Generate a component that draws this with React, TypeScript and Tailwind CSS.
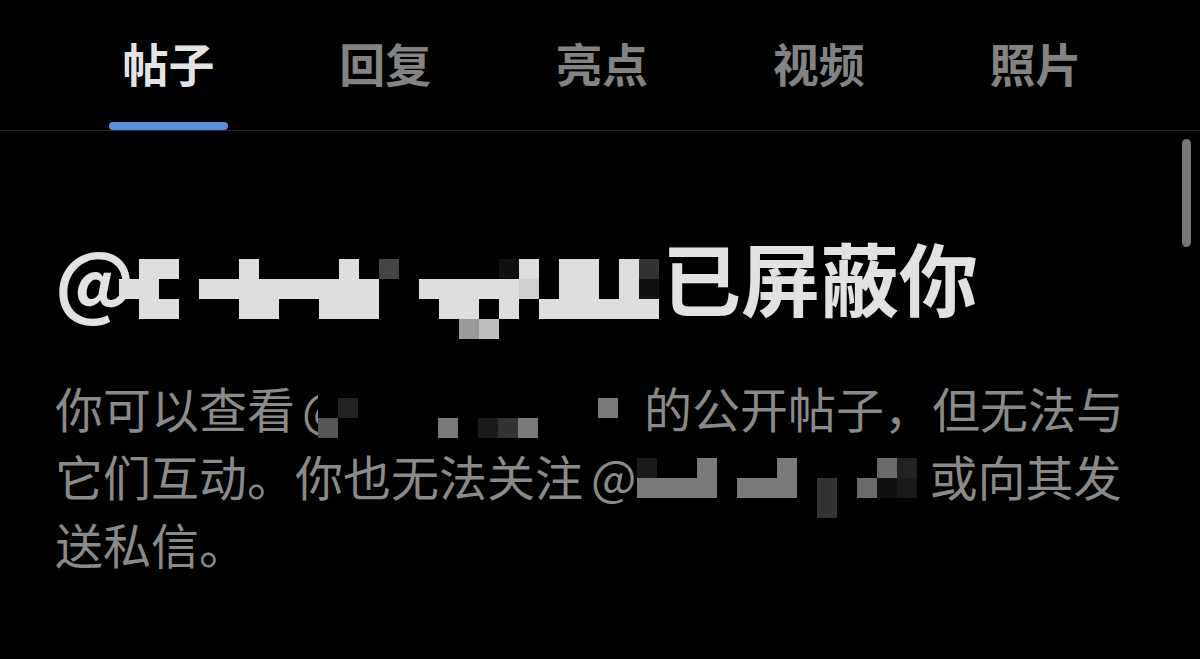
import React from "react";

// Mosaic cells: each char maps to a colour class, "." is empty
const CELL: Record<string, string> = {
  W: "bg-[#dedede]",
  w: "bg-[#cfcfcf]",
  L: "bg-[#bdbdbd]",
  G: "bg-[#9a9a9a]",
  g: "bg-[#7a7a7a]",
  h: "bg-[#6a6a6a]",
  m: "bg-[#555555]",
  D: "bg-[#444444]",
  d: "bg-[#333333]",
  k: "bg-[#222222]",
  K: "bg-[#1a1a1a]",
  x: "bg-[#111111]",
  ".": "",
};

const headingMosaic = [
  ".WW...W....W.D.....xW.WW.Wd",
  "WW..WWWWWWWWW..WWWWWw.WW.Wx",
  ".WW...WW..WWW...WW.W.WWWWWW",
  ".................GL........",
];

const line1Mosaic = [
  ".k............g",
  "m.....g.Kdg....",
];

const line2Mosaic = [
  "K..g...g....hk",
  "gggg.ggg.d.hxK",
  ".........d....",
];

function Mosaic({ rows }: { rows: string[] }) {
  return (
    <div className="flex flex-col shrink-0">
      {rows.map((row, i) => (
        <div key={i} className="flex">
          {row.split("").map((c, j) => (
            <div key={j} className={`w-[20px] h-[20px] ${CELL[c]}`} />
          ))}
        </div>
      ))}
    </div>
  );
}

const tabs = ["帖子", "回复", "亮点", "视频", "照片"];

export default function App() {
  return (
    <div
      className="relative w-[1200px] h-[659px] bg-black overflow-hidden"
      style={{ fontFamily: '"Noto Sans CJK SC", "Noto Sans", sans-serif' }}
    >
      {/* Tabs */}
      <header className="h-[131px] border-b border-[#262626] pl-[60px] pr-[56px] grid grid-cols-5">
        {tabs.map((t, i) => (
          <div key={t} className="flex flex-col items-center justify-between">
            <span
              className={`pt-[34px] text-[46px] leading-[56px] font-bold ${
                i === 0 ? "text-[#e4e4e4]" : "text-[#838383]"
              }`}
            >
              {t}
            </span>
            {i === 0 ? (
              <div className="w-[119px] h-[8px] rounded-full bg-[#5b8fe0]" />
            ) : (
              <div className="h-[8px]" />
            )}
          </div>
        ))}
      </header>

      {/* Scrollbar */}
      <div className="absolute left-[1182px] top-[139px] w-[9px] h-[108px] rounded-full bg-[#767676]" />

      <main className="pl-[55px] pt-[106px]">
        {/* Heading */}
        <div className="flex items-start h-[80px] text-[79px] leading-[80px] font-bold text-[#e2e2e2]">
          <span className="w-[64px] shrink-0">@</span>
          <div className="mt-[22px]">
            <Mosaic rows={headingMosaic} />
          </div>
          <span className="ml-[3px] whitespace-nowrap">已屏蔽你</span>
        </div>

        {/* Body */}
        <div className="mt-[56px] text-[48px] leading-[68px] text-[#8a8a8a] whitespace-nowrap">
          <div className="flex items-start h-[68px]">
            <span>你可以查看</span>
            <span className="ml-[7px] inline-block w-[16px] overflow-hidden">@</span>
            <div className="mt-[25px] w-[326px]">
              <Mosaic rows={line1Mosaic} />
            </div>
            <span>的公开帖子，但无法与</span>
          </div>
          <div className="flex items-start h-[68px]">
            <span>它们互动。你也无法关注</span>
            <span className="ml-[8px]">@</span>
            <div className="mt-[17px] ml-[1px] w-[292px]">
              <Mosaic rows={line2Mosaic} />
            </div>
            <span>或向其发</span>
          </div>
          <div className="h-[68px]">送私信。</div>
        </div>
      </main>
    </div>
  );
}
